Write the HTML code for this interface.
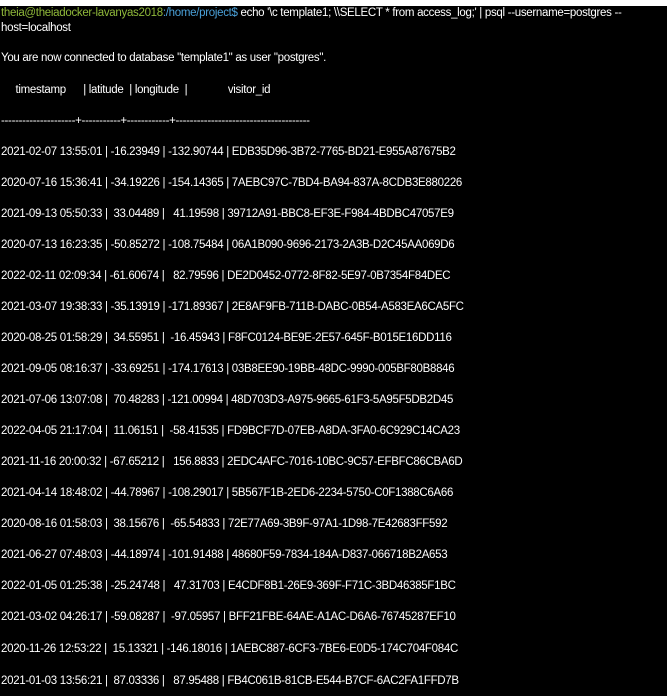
<!DOCTYPE html>
<html><head><meta charset="utf-8"><style>
html,body{margin:0;padding:0;background:#fff;width:672px;height:696px;overflow:hidden}
#t{position:absolute;left:0;top:6px;width:667px;height:690px;background:#000;color:#fff;font-family:"Liberation Sans",sans-serif;font-size:11.5px;letter-spacing:-0.3px}
.l{position:absolute;left:1px;white-space:pre;line-height:14px}
.g{color:#8fb83a}.b{color:#4aa0d8}
</style></head><body><div id="t">
<div class="l" style="top:0"><span class="g">theia@theiadocker-lavanyas2018</span><span class="b">:/home/project$</span> echo '\c template1; \\SELECT * from access_log;' | psql --username=postgres --</div>
<div class="l" style="top:15px">host=localhost</div>
<div class="l" style="top:45px">You are now connected to database "template1" as user "postgres".</div>
<div class="l" style="top:77px">     timestamp      | latitude  | longitude  |              visitor_id</div>
<div class="l" style="top:108px">---------------------+-----------+------------+--------------------------------------</div>
<div class="l" style="top:139px">2021-02-07 13:55:01 | -16.23949 | -132.90744 | EDB35D96-3B72-7765-BD21-E955A87675B2</div>
<div class="l" style="top:170px">2020-07-16 15:36:41 | -34.19226 | -154.14365 | 7AEBC97C-7BD4-BA94-837A-8CDB3E880226</div>
<div class="l" style="top:201px">2021-09-13 05:50:33 |  33.04489 |   41.19598 | 39712A91-BBC8-EF3E-F984-4BDBC47057E9</div>
<div class="l" style="top:232px">2020-07-13 16:23:35 | -50.85272 | -108.75484 | 06A1B090-9696-2173-2A3B-D2C45AA069D6</div>
<div class="l" style="top:263px">2022-02-11 02:09:34 | -61.60674 |   82.79596 | DE2D0452-0772-8F82-5E97-0B7354F84DEC</div>
<div class="l" style="top:294px">2021-03-07 19:38:33 | -35.13919 | -171.89367 | 2E8AF9FB-711B-DABC-0B54-A583EA6CA5FC</div>
<div class="l" style="top:325px">2020-08-25 01:58:29 |  34.55951 |  -16.45943 | F8FC0124-BE9E-2E57-645F-B015E16DD116</div>
<div class="l" style="top:356px">2021-09-05 08:16:37 | -33.69251 | -174.17613 | 03B8EE90-19BB-48DC-9990-005BF80B8846</div>
<div class="l" style="top:387px">2021-07-06 13:07:08 |  70.48283 | -121.00994 | 48D703D3-A975-9665-61F3-5A95F5DB2D45</div>
<div class="l" style="top:418px">2022-04-05 21:17:04 |  11.06151 |  -58.41535 | FD9BCF7D-07EB-A8DA-3FA0-6C929C14CA23</div>
<div class="l" style="top:449px">2021-11-16 20:00:32 | -67.65212 |   156.8833 | 2EDC4AFC-7016-10BC-9C57-EFBFC86CBA6D</div>
<div class="l" style="top:480px">2021-04-14 18:48:02 | -44.78967 | -108.29017 | 5B567F1B-2ED6-2234-5750-C0F1388C6A66</div>
<div class="l" style="top:511px">2020-08-16 01:58:03 |  38.15676 |  -65.54833 | 72E77A69-3B9F-97A1-1D98-7E42683FF592</div>
<div class="l" style="top:542px">2021-06-27 07:48:03 | -44.18974 | -101.91488 | 48680F59-7834-184A-D837-066718B2A653</div>
<div class="l" style="top:573px">2022-01-05 01:25:38 | -25.24748 |   47.31703 | E4CDF8B1-26E9-369F-F71C-3BD46385F1BC</div>
<div class="l" style="top:604px">2021-03-02 04:26:17 | -59.08287 |  -97.05957 | BFF21FBE-64AE-A1AC-D6A6-76745287EF10</div>
<div class="l" style="top:636px">2020-11-26 12:53:22 |  15.13321 | -146.18016 | 1AEBC887-6CF3-7BE6-E0D5-174C704F084C</div>
<div class="l" style="top:668px">2021-01-03 13:56:21 |  87.03336 |   87.95488 | FB4C061B-81CB-E544-B7CF-6AC2FA1FFD7B</div>
</div></body></html>
